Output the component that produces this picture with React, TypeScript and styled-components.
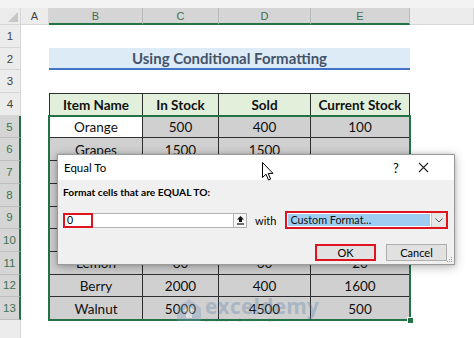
import React from "react";
import styled, { createGlobalStyle } from "styled-components";

const GlobalStyle = createGlobalStyle`
  html, body {
    margin: 0;
    padding: 0;
    background: #ffffff;
  }
  body {
    width: 474px;
    height: 338px;
    overflow: hidden;
    font-family: Lato, "Liberation Sans", sans-serif;
  }
`;

const GREEN = "#217346";

const Page = styled.div`
  position: relative;
  width: 474px;
  height: 338px;
  overflow: hidden;
  background: #ffffff;
`;

const TopStrip = styled.div`
  height: 8px;
  background: #f3f3f3;
`;

const Sheet = styled.div`
  display: grid;
  grid-template-columns: 21px 28px 94px 76px 92px 99px 1fr;
  grid-template-rows: 17px repeat(14, 22.7px);
`;

const Corner = styled.div`
  position: relative;
  background: #ececec;
  border-right: 1px solid #d6d6d6;
  border-bottom: 1px solid #d6d6d6;
  &::after {
    content: "";
    position: absolute;
    right: 2px;
    bottom: 2px;
    border-left: 10px solid transparent;
    border-bottom: 10px solid #c6c6c6;
  }
`;

const ColHead = styled.div<{ $sel?: boolean }>`
  display: flex;
  align-items: center;
  justify-content: center;
  font-family: "Liberation Sans", Arial, sans-serif;
  font-size: 11px;
  color: ${(p) => (p.$sel ? "#3f6f52" : "#444444")};
  background: ${(p) => (p.$sel ? "#d5d5d5" : "#ececec")};
  border-right: 1px solid ${(p) => (p.$sel ? "#b9b9b9" : "#d6d6d6")};
  border-bottom: ${(p) => (p.$sel ? `2px solid ${GREEN}` : "1px solid #d6d6d6")};
`;

const RowHead = styled.div<{ $sel?: boolean }>`
  display: flex;
  align-items: center;
  justify-content: center;
  font-family: "Liberation Sans", Arial, sans-serif;
  font-size: 11.5px;
  color: ${(p) => (p.$sel ? "#3c7352" : "#444444")};
  background: ${(p) => (p.$sel ? "#d5d5d5" : "#ececec")};
  border-bottom: 1px solid ${(p) => (p.$sel ? "#bdbdbd" : "#d6d6d6")};
  border-right: ${(p) => (p.$sel ? `2px solid ${GREEN}` : "1px solid #d6d6d6")};
`;

const Blank = styled.div``;

const TitleCell = styled.div`
  grid-column: span 4;
  display: flex;
  align-items: center;
  justify-content: center;
  background: #ddebf7;
  border-bottom: 2px solid #4472c4;
  color: #44546a;
  font-weight: 700;
  font-size: 15px;
`;

const Cell = styled.div<{ $head?: boolean; $first?: boolean; $active?: boolean }>`
  display: flex;
  align-items: center;
  justify-content: center;
  font-size: 13.5px;
  color: #111111;
  font-weight: ${(p) => (p.$head ? 700 : 400)};
  background: ${(p) => (p.$head ? "#e2efda" : p.$active ? "#ffffff" : "#d0d0d0")};
  border-right: 1px solid #2e2e2e;
  border-bottom: 1px solid #2e2e2e;
  border-top: ${(p) => (p.$head ? "1px solid #2e2e2e" : "none")};
  border-left: ${(p) => (p.$first ? "1px solid #2e2e2e" : "none")};
  padding-top: 1px;
`;

/* the selected range B5:E13, with its green outline and fill handle */
const Range = styled.div`
  grid-column: 3 / 7;
  grid-row: 6 / 15;
  position: relative;
  display: grid;
  grid-template-columns: 94px 76px 92px 99px;
  grid-auto-rows: 22.7px;
  &::after {
    content: "";
    position: absolute;
    inset: -1px;
    border: 2px solid ${GREEN};
    pointer-events: none;
  }
  &::before {
    content: "";
    position: absolute;
    right: -4px;
    bottom: -4px;
    width: 5px;
    height: 5px;
    background: ${GREEN};
    border: 1px solid #ffffff;
    z-index: 1;
  }
`;

/* Dialog */

const Dialog = styled.div`
  position: absolute;
  left: 57px;
  top: 154px;
  width: 398px;
  height: 111px;
  box-sizing: border-box;
  border: 1px solid #9a9a9a;
  background: #f0f0f0;
  box-shadow: 0 2px 10px rgba(0, 0, 0, 0.28), 0 0 3px rgba(0, 0, 0, 0.15);
  display: flex;
  flex-direction: column;
  font-family: Lato, "Liberation Sans", sans-serif;
  color: #000000;
`;

const TitleBar = styled.div`
  height: 25px;
  background: #ffffff;
  display: flex;
  align-items: center;
  padding: 0 12px 0 6px;
  font-size: 11.5px;
`;

const TitleText = styled.span`
  flex: 1;
`;

const TitleButton = styled.span<{ $w: number }>`
  width: ${(p) => p.$w}px;
  display: flex;
  justify-content: center;
  font-size: 13px;
`;

const Body = styled.div`
  flex: 1;
  padding: 5px 6px 0 5px;
  position: relative;
`;

const Prompt = styled.div`
  font-size: 10.2px;
  font-weight: 700;
  line-height: 14px;
`;

const InputRow = styled.div`
  margin-top: 12px;
  display: flex;
  align-items: center;
  height: 18px;
`;

const Field = styled.div`
  position: relative;
  width: 171px;
  height: 15px;
  box-sizing: border-box;
  background: #ffffff;
  border: 1px solid #b4b4b4;
  font-size: 10.5px;
  line-height: 13px;
  padding-left: 3px;
`;

const Mark = styled.div<{ $w: string }>`
  position: absolute;
  left: -1px;
  top: -1px;
  bottom: -1px;
  width: ${(p) => p.$w};
  border: 2px solid #e0141e;
  box-sizing: border-box;
`;

const Collapse = styled.div`
  width: 13px;
  height: 15px;
  box-sizing: border-box;
  border: 1px solid #adadad;
  border-left: none;
  background: #f7f7f7;
  display: flex;
  align-items: center;
  justify-content: center;
`;

const WithLabel = styled.span`
  font-size: 11px;
  margin: 0 9px 0 8px;
`;

const Combo = styled.div`
  flex: 1;
  height: 18px;
  box-sizing: border-box;
  border: 2px solid #e0141e;
  display: flex;
  background: #ffffff;
`;

const ComboValue = styled.div`
  flex: 1;
  margin: 1px;
  background: #9fcdf1;
  font-size: 10.8px;
  line-height: 12px;
  padding-left: 2px;
  color: #111111;
`;

const ComboArrow = styled.div`
  width: 14px;
  background: #e6e6e6;
  border-left: 1px solid #c8c8c8;
  display: flex;
  align-items: center;
  justify-content: center;
`;

const Buttons = styled.div`
  margin-top: 15px;
  display: flex;
  justify-content: flex-end;
  gap: 10px;
  padding-right: 1px;
`;

const Btn = styled.div<{ $marked?: boolean }>`
  width: 61px;
  height: 17px;
  box-sizing: border-box;
  background: #e1e1e1;
  border: ${(p) => (p.$marked ? "2px solid #e0141e" : "1px solid #adadad")};
  display: flex;
  align-items: center;
  justify-content: center;
  font-size: 11px;
`;

const Grip = styled.svg`
  position: absolute;
  right: 1px;
  bottom: 1px;
`;

const Cursor = styled.svg`
  position: absolute;
  left: 262px;
  top: 162px;
`;

const Watermark = styled.div`
  position: absolute;
  left: 176px;
  top: 296px;
  display: flex;
  align-items: center;
  gap: 3px;
  opacity: 0.33;
  pointer-events: none;
`;

const WmText = styled.div`
  display: flex;
  flex-direction: column;
  line-height: 1;
`;

const WmName = styled.span`
  font-family: "Open Sans", sans-serif;
  font-weight: 700;
  font-size: 21px;
  color: #5a7fa8;
  letter-spacing: 0.2px;
`;

const WmTag = styled.span`
  font-family: "Open Sans", sans-serif;
  font-size: 5.5px;
  color: #6d87a3;
  letter-spacing: 1.6px;
  margin-top: 1px;
`;

type Row = [string, string, string, string];

const data: Row[] = [
  ["Orange", "500", "400", "100"],
  ["Grapes", "1500", "1500", ""],
  ["Apple", "1200", "700", "500"],
  ["Mango", "900", "900", ""],
  ["Banana", "1100", "600", "500"],
  ["Cherry", "300", "300", ""],
  ["Lemon", "80", "60", "20"],
  ["Berry", "2000", "400", "1600"],
  ["Walnut", "5000", "4500", "500"],
];

const headers = ["Item Name", "In Stock", "Sold", "Current Stock"];
const cols = ["A", "B", "C", "D", "E", ""];

export default function App() {
  const rows: React.ReactNode[] = [];

  for (let r = 1; r <= 14; r++) {
    const sel = r >= 5 && r <= 13;
    rows.push(
      <RowHead key={`h${r}`} $sel={sel}>
        {r < 14 ? r : ""}
      </RowHead>
    );
    rows.push(<Blank key={`a${r}`} />);
    if (r === 2) {
      rows.push(<TitleCell key="title">Using Conditional Formatting</TitleCell>);
    } else if (r === 4) {
      headers.forEach((h, i) =>
        rows.push(
          <Cell key={`th${i}`} $head $first={i === 0}>
            {h}
          </Cell>
        )
      );
    } else if (!sel) {
      for (let i = 0; i < 4; i++) rows.push(<Blank key={`b${r}-${i}`} />);
    }
    rows.push(<Blank key={`f${r}`} />);
  }

  return (
    <Page>
      <GlobalStyle />
      <TopStrip />
      <Sheet>
        <Corner />
        {cols.map((c, i) => (
          <ColHead key={`col${i}`} $sel={i >= 1 && i <= 4}>
            {c}
          </ColHead>
        ))}
        {rows}
        <Range>
          {data.map((row, ri) =>
            row.map((v, i) => (
              <Cell key={`c${ri}-${i}`} $first={i === 0} $active={ri === 0 && i === 0}>
                {v}
              </Cell>
            ))
          )}
        </Range>
      </Sheet>

      <Watermark>
        <svg width="26" height="24" viewBox="0 0 26 24">
          <path d="M13 1 L25 10 L25 23 L1 23 L1 10 Z" fill="#7e9cc0" />
          <path d="M7 13 L13 8 L19 13 L16 13 L16 20 L10 20 L10 13 Z" fill="#ffffff" />
        </svg>
        <WmText>
          <WmName>exceldemy</WmName>
          <WmTag>EXCEL · DATA · BI</WmTag>
        </WmText>
      </Watermark>

      <Dialog>
        <TitleBar>
          <TitleText>Equal To</TitleText>
          <TitleButton $w={16}>?</TitleButton>
          <TitleButton $w={38}>
            <svg width="11" height="11" viewBox="0 0 11 11">
              <path d="M1 1 L10 10 M10 1 L1 10" stroke="#222" strokeWidth="1.1" />
            </svg>
          </TitleButton>
        </TitleBar>
        <Body>
          <Prompt>Format cells that are EQUAL TO:</Prompt>
          <InputRow>
            <Field>
              0
              <Mark $w="30px" />
            </Field>
            <Collapse>
              <svg width="9" height="10" viewBox="0 0 9 10">
                <path d="M4.5 1 L8 4.5 L6 4.5 L6 7 L3 7 L3 4.5 L1 4.5 Z" fill="#111" />
                <path d="M1 9 H8" stroke="#111" strokeWidth="1.2" />
              </svg>
            </Collapse>
            <WithLabel>with</WithLabel>
            <Combo>
              <ComboValue>Custom Format...</ComboValue>
              <ComboArrow>
                <svg width="8" height="5" viewBox="0 0 8 5">
                  <path d="M0.5 0.5 L4 4 L7.5 0.5" stroke="#555" fill="none" strokeWidth="1" />
                </svg>
              </ComboArrow>
            </Combo>
          </InputRow>
          <Buttons>
            <Btn $marked>OK</Btn>
            <Btn>Cancel</Btn>
          </Buttons>
          <Grip width="7" height="7" viewBox="0 0 7 7">
            <rect x="5" y="1" width="1" height="1" fill="#9a9a9a" />
            <rect x="3" y="3" width="1" height="1" fill="#9a9a9a" />
            <rect x="5" y="3" width="1" height="1" fill="#9a9a9a" />
            <rect x="1" y="5" width="1" height="1" fill="#9a9a9a" />
            <rect x="3" y="5" width="1" height="1" fill="#9a9a9a" />
            <rect x="5" y="5" width="1" height="1" fill="#9a9a9a" />
          </Grip>
        </Body>
      </Dialog>

      <Cursor width="12" height="19" viewBox="0 0 12 19">
        <path
          d="M0.5 0.5 L0.5 15.5 L4 12.2 L6.5 18 L8.6 17.1 L6.2 11.4 L11 11.4 Z"
          fill="#ffffff"
          stroke="#000000"
          strokeWidth="1"
          strokeLinejoin="round"
        />
      </Cursor>
    </Page>
  );
}
